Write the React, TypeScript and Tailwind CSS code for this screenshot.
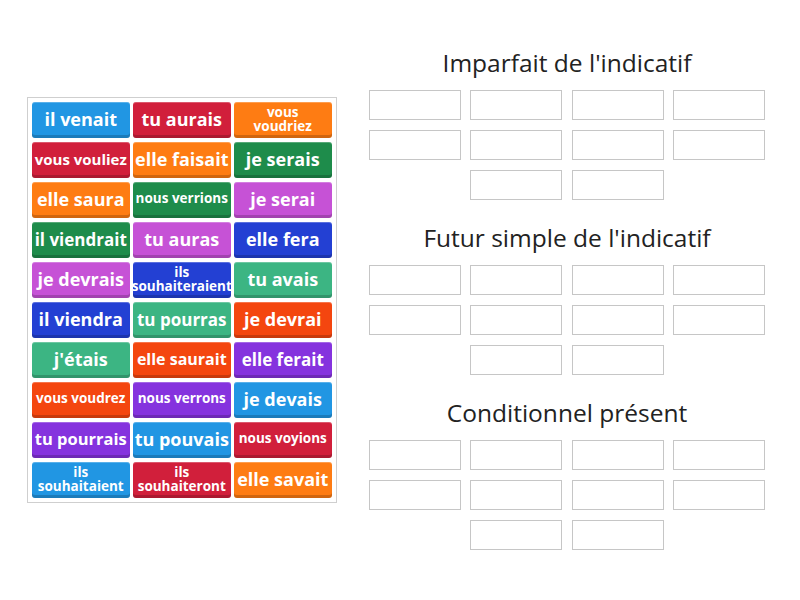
type Tile = { text: string; color: string; size?: string; two?: boolean };

const blue = "bg-[#2196e3]";
const red = "bg-[#d11f3b]";
const orange = "bg-[#fe7c13]";
const green = "bg-[#1e8c4b]";
const pink = "bg-[#c652d6]";
const royal = "bg-[#2340d3]";
const teal = "bg-[#3cb583]";
const redOrange = "bg-[#f4460f]";
const purple = "bg-[#8533de]";

const tiles: Tile[] = [
  { text: "il venait", color: blue },
  { text: "tu aurais", color: red },
  { text: "vous voudriez", color: orange, two: true },
  { text: "vous vouliez", color: red, size: "text-[15px]" },
  { text: "elle faisait", color: orange },
  { text: "je serais", color: green },
  { text: "elle saura", color: orange },
  { text: "nous verrions", color: green, size: "text-[13.5px]" },
  { text: "je serai", color: pink },
  { text: "il viendrait", color: green, size: "text-[17px]" },
  { text: "tu auras", color: pink },
  { text: "elle fera", color: royal },
  { text: "je devrais", color: pink },
  { text: "ils souhaiteraient", color: royal, two: true },
  { text: "tu avais", color: teal },
  { text: "il viendra", color: royal },
  { text: "tu pourras", color: teal, size: "text-[17px]" },
  { text: "je devrai", color: redOrange },
  { text: "j'étais", color: teal },
  { text: "elle saurait", color: redOrange, size: "text-[16px]" },
  { text: "elle ferait", color: purple, size: "text-[17px]" },
  { text: "vous voudrez", color: redOrange, size: "text-[13.5px]" },
  { text: "nous verrons", color: purple, size: "text-[13.5px]" },
  { text: "je devais", color: blue },
  { text: "tu pourrais", color: purple, size: "text-[16.5px]" },
  { text: "tu pouvais", color: blue },
  { text: "nous voyions", color: red, size: "text-[13.5px]" },
  { text: "ils souhaitaient", color: blue, two: true },
  { text: "ils souhaiteront", color: red, two: true },
  { text: "elle savait", color: orange },
];

function TileCard({ tile }: { tile: Tile }) {
  const [a, b] = tile.text.split(/ (.+)/);
  return (
    <div
      className={`${tile.color} flex h-[36px] w-[97.5px] items-center justify-center rounded-[3px] text-center font-bold leading-none text-white shadow-[inset_0_1px_0_rgba(255,255,255,0.25),inset_0_-3px_0_rgba(0,0,0,0.18)]`}
    >
      {tile.two ? (
        <span className="flex flex-col items-center pb-[2px] text-[13.5px] leading-[14.5px]">
          <span>{a}</span>
          <span>{b}</span>
        </span>
      ) : (
        <span className={`${tile.size ?? "text-[18px]"} whitespace-nowrap pb-[2px]`}>{tile.text}</span>
      )}
    </div>
  );
}

function Box() {
  return <div className="h-[30px] w-[92px] border border-[#c6c6c6] bg-white" />;
}

function Group({ title, first }: { title: string; first?: boolean }) {
  return (
    <div className={first ? "" : "mt-[22px]"}>
      <h2 className="h-[32px] text-center text-[24.5px] leading-[32px] text-[#222]">{title}</h2>
      <div className="mt-[11px] grid grid-cols-[repeat(4,92px)] gap-x-[9.5px] gap-y-[10px]">
        {Array.from({ length: 8 }).map((_, i) => (
          <Box key={i} />
        ))}
      </div>
      <div className="mt-[10px] flex justify-center gap-x-[9.5px]">
        <Box />
        <Box />
      </div>
    </div>
  );
}

export default function App() {
  return (
    <div className="flex h-[600px] w-[800px] bg-white font-['Open_Sans',sans-serif]">
      <div className="ml-[27px] mt-[97px] self-start border border-[#cfcfcf] bg-white p-[4px]">
        <div className="grid grid-cols-[repeat(3,97.5px)] gap-x-[3.5px] gap-y-[4px]">
          {tiles.map((t) => (
            <TileCard key={t.text} tile={t} />
          ))}
        </div>
      </div>
      <div className="ml-[32px] mt-[47px] w-[397px]">
        <Group title="Imparfait de l'indicatif" first />
        <Group title="Futur simple de l'indicatif" />
        <Group title="Conditionnel présent" />
      </div>
    </div>
  );
}
